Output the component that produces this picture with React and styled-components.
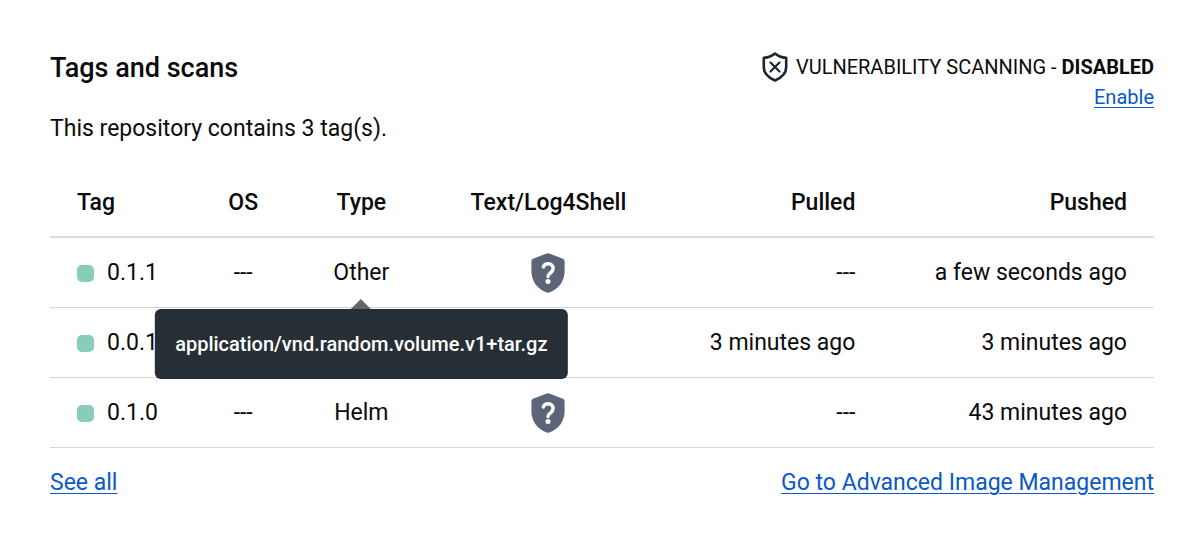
import React from 'react';
import styled, { createGlobalStyle } from 'styled-components';

const columns = [
  { label: 'Tag', width: '13%', align: 'left' },
  { label: 'OS', width: '9%', align: 'center' },
  { label: 'Type', width: '12.4%', align: 'center' },
  { label: 'Text/Log4Shell', width: '21.5%', align: 'center' },
  { label: 'Pulled', width: '19.5%', align: 'right' },
  { label: 'Pushed', width: '24.6%', align: 'right' },
];

const tags = [
  {
    name: '0.1.1',
    os: '---',
    type: 'Other',
    mediaType: 'application/vnd.random.volume.v1+tar.gz',
    pulled: '---',
    pushed: 'a few seconds ago',
  },
  {
    name: '0.0.1',
    pulled: '3 minutes ago',
    pushed: '3 minutes ago',
  },
  {
    name: '0.1.0',
    os: '---',
    type: 'Helm',
    pulled: '---',
    pushed: '43 minutes ago',
  },
];

const ShieldDisabled = () => (
  <ScanIcon viewBox="0 0 26 30" aria-hidden="true">
    <path
      strokeWidth="2.6"
      d="M13 1.500C10.400 3.800 6.600 5.500 1.800 5.900V15c0 6 4.200 10.500 11.200 13.500C20 25.500 24.200 21 24.200 15V5.900C19.400 5.500 15.600 3.800 13 1.500Z"
    />
    <path strokeWidth="2.2" d="M8.500 10.500l9 9M17.500 10.500l-9 9" />
  </ScanIcon>
);

const ShieldUnknown = () => (
  <UnknownIcon viewBox="0 0 34 40" role="img" aria-label="Unknown">
    <path
      fill="#5c6577"
      d="M15.800.400a3 3 0 0 1 2.400 0L32 5.800a2.600 2.600 0 0 1 1.600 2.400V18c0 10-5.600 18-15.300 21.600a3.600 3.600 0 0 1-2.600 0C6 36 .400 28 .400 18V8.200A2.600 2.600 0 0 1 2 5.800Z"
    />
    <path
      fill="none"
      stroke="#fff"
      strokeWidth="3.400"
      strokeLinecap="round"
      strokeLinejoin="round"
      d="M12.300 14c.700-2 2.500-3.200 4.800-3.200 3 0 5 1.900 5 4.600 0 2.100-1 3.200-2.600 4.500-1.500 1.200-2.500 2-2.500 3.600"
    />
    <circle cx="17" cy="28.400" r="2.500" fill="#fff" />
  </UnknownIcon>
);

const TagRow = ({ tag }) => (
  <tr>
    <Cell align="left">
      <TagName>
        <Status />
        {tag.name}
      </TagName>
    </Cell>
    <Cell align="center">{tag.os}</Cell>
    <Cell align="center">
      <TypeLabel>
        {tag.type}
        {tag.mediaType && <Tooltip role="tooltip">{tag.mediaType}</Tooltip>}
      </TypeLabel>
    </Cell>
    <Cell align="center">
      <ShieldUnknown />
    </Cell>
    <Cell align="right">{tag.pulled}</Cell>
    <Cell align="right">{tag.pushed}</Cell>
  </tr>
);

const App = () => (
  <>
    <GlobalStyle />
    <Page>
      <Header>
        <div>
          <Title>Tags and scans</Title>
          <Summary>This repository contains {tags.length} tag(s).</Summary>
        </div>
        <Scanning>
          <ScanStatus>
            <ShieldDisabled />
            <span>
              VULNERABILITY SCANNING - <strong>DISABLED</strong>
            </span>
          </ScanStatus>
          <Link href="#enable">Enable</Link>
        </Scanning>
      </Header>

      <Table>
        <colgroup>
          {columns.map(({ label, width }) => (
            <Column key={label} width={width} />
          ))}
        </colgroup>
        <thead>
          <tr>
            {columns.map(({ label, align }) => (
              <HeadCell key={label} align={align} scope="col">
                {label}
              </HeadCell>
            ))}
          </tr>
        </thead>
        <tbody>
          {tags.map(tag => (
            <TagRow key={tag.name} tag={tag} />
          ))}
        </tbody>
      </Table>

      <Footer>
        <Link href="#tags">See all</Link>
        <Link href="#image-management">Go to Advanced Image Management</Link>
      </Footer>
    </Page>
  </>
);

const GlobalStyle = createGlobalStyle`
  * {
    box-sizing: border-box;
  }

  body {
    margin: 0;
    background: #fff;
    color: #0b0b0b;
    font-family: Roboto, 'Liberation Sans', sans-serif;
    font-size: 23px;
    line-height: 30px;
  }
`;

const Page = styled.main`
  padding: 52px 46px 40px 50px;
`;

const Header = styled.header`
  display: flex;
  justify-content: space-between;
  align-items: flex-start;
`;

const Title = styled.h2`
  margin: 0;
  font-size: 27px;
  font-weight: 500;
  line-height: 32px;
`;

const Summary = styled.p`
  margin: 30px 0 0;
`;

const Scanning = styled.div`
  display: flex;
  flex-direction: column;
  align-items: flex-end;
  font-size: 20px;
  line-height: 30px;
`;

const ScanStatus = styled.div`
  display: flex;
  align-items: center;
  gap: 8px;

  strong {
    font-weight: 700;
  }
`;

const ScanIcon = styled.svg`
  width: 26px;
  height: 30px;
  fill: none;
  stroke: #1c262d;
  stroke-linecap: round;
  stroke-linejoin: round;
`;

const Link = styled.a`
  color: #0a58ca;
  text-decoration: underline;
  text-decoration-thickness: 1px;
  text-underline-offset: 3px;
`;

const Table = styled.table`
  width: 100%;
  margin-top: 24px;
  border-collapse: collapse;
  table-layout: fixed;
`;

const Column = styled.col`
  width: ${props => props.width};
`;

const HeadCell = styled.th`
  height: 69px;
  padding: 2px 27px 0;
  border-bottom: 2px solid #dcdcdc;
  font-weight: 500;
  text-align: ${props => props.align};
  white-space: nowrap;
`;

const Cell = styled.td`
  height: 70px;
  padding: 2px 27px 0;
  border-bottom: 1px solid #d4d4d4;
  text-align: ${props => props.align};
  white-space: nowrap;
`;

const TagName = styled.div`
  display: flex;
  align-items: center;
  gap: 13px;
`;

const Status = styled.span`
  width: 17px;
  height: 17px;
  border-radius: 5px;
  background: #8accba;
`;

const TypeLabel = styled.span`
  position: relative;
  display: inline-block;
`;

const Tooltip = styled.span`
  position: absolute;
  z-index: 1;
  top: calc(100% + 21px);
  left: 50%;
  padding: 20px;
  border-radius: 6px;
  background: #262f35;
  color: #fff;
  font-size: 20px;
  font-weight: 500;
  transform: translateX(-50%);

  &::before {
    content: '';
    position: absolute;
    bottom: 100%;
    left: 50%;
    border: 10px solid transparent;
    border-top: 0;
    border-bottom-color: #666;
    transform: translateX(-50%);
  }
`;

const UnknownIcon = styled.svg`
  display: block;
  width: 34px;
  height: 40px;
  margin: 0 auto;
`;

const Footer = styled.footer`
  display: flex;
  justify-content: space-between;
  margin-top: 20px;
`;

export default App;
